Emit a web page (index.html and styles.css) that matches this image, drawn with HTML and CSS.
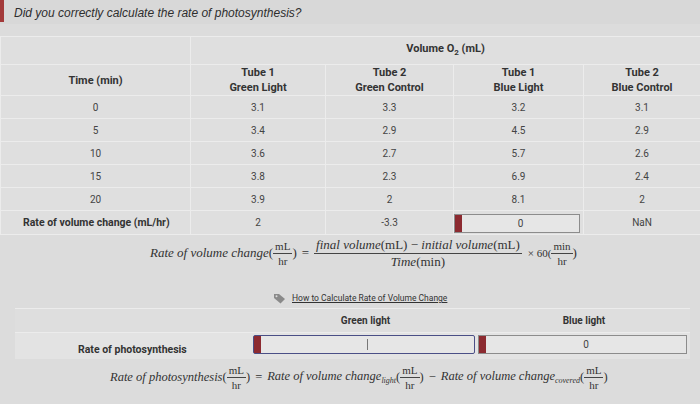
FILE: index.html
```html
<!DOCTYPE html>
<html>
<head>
<meta charset="utf-8">
<link rel="stylesheet" href="styles.css">
</head>
<body>
<div class="top">
  <div class="redbar"></div>
  <div class="question">Did you correctly calculate the rate of photosynthesis?</div>
</div>

<table class="data">
  <colgroup>
    <col class="c1"><col class="c2"><col class="c3"><col class="c4"><col class="c5">
  </colgroup>
  <tr class="h1">
    <th></th>
    <th colspan="4">Volume O<sub>2</sub> (mL)</th>
  </tr>
  <tr class="h2">
    <th>Time (min)</th>
    <th>Tube 1<br>Green Light</th>
    <th>Tube 2<br>Green Control</th>
    <th>Tube 1<br>Blue Light</th>
    <th>Tube 2<br>Blue Control</th>
  </tr>
  <tr><td>0</td><td>3.1</td><td>3.3</td><td>3.2</td><td>3.1</td></tr>
  <tr><td>5</td><td>3.4</td><td>2.9</td><td>4.5</td><td>2.9</td></tr>
  <tr><td>10</td><td>3.6</td><td>2.7</td><td>5.7</td><td>2.6</td></tr>
  <tr><td>15</td><td>3.8</td><td>2.3</td><td>6.9</td><td>2.4</td></tr>
  <tr><td>20</td><td>3.9</td><td>2</td><td>8.1</td><td>2</td></tr>
  <tr class="rate">
    <td class="label">Rate of volume change (mL/hr)</td>
    <td>2</td>
    <td>-3.3</td>
    <td class="inputcell"><div class="inbox"><span class="flag"></span><span class="val">0</span></div></td>
    <td>NaN</td>
  </tr>
</table>

<div class="formula f1">
  <span class="it">Rate of volume change</span><span>(</span><span class="frac sm"><span class="num">mL</span><span class="den">hr</span></span><span>)</span>
  <span class="eq">=</span>
  <span class="frac"><span class="num"><span class="it">final volume</span>(mL) − <span class="it">initial volume</span>(mL)</span><span class="den"><span class="it">Time</span>(min)</span></span>
  <span class="times">× 60(</span><span class="frac sm"><span class="num">min</span><span class="den">hr</span></span><span>)</span>
</div>

<div class="link">
  <svg class="tag" width="13" height="11" viewBox="0 0 13 11"><path d="M1 1h5l6 5-4.5 4.5L1 5z" fill="#8a8a8a"/><circle cx="3.5" cy="3.3" r="1" fill="#dcdcdc"/></svg>
  <a class="howto">How to Calculate Rate of Volume Change</a>
</div>

<table class="photo">
  <colgroup><col class="p1"><col class="p2"><col class="p3"></colgroup>
  <tr class="ph">
    <th></th><th>Green light</th><th>Blue light</th>
  </tr>
  <tr class="pr">
    <td class="plabel">Rate of photosynthesis</td>
    <td><div class="inbox focus"><span class="flag"></span><span class="val"><span class="caret"></span></span></div></td>
    <td><div class="inbox"><span class="flag"></span><span class="val">0</span></div></td>
  </tr>
</table>

<div class="formula f2">
  <span class="it">Rate of photosynthesis</span><span>(</span><span class="frac sm"><span class="num">mL</span><span class="den">hr</span></span><span>)</span>
  <span class="eq">=</span>
  <span class="it">Rate of volume change<sub>light</sub></span><span>(</span><span class="frac sm"><span class="num">mL</span><span class="den">hr</span></span><span>)</span>
  <span class="eq">−</span>
  <span class="it">Rate of volume change<sub>covered</sub></span><span>(</span><span class="frac sm"><span class="num">mL</span><span class="den">hr</span></span><span>)</span>
</div>
</body>
</html>
```

FILE: styles.css
```css
html, body {
  margin: 0;
  padding: 0;
}
body {
  background: #dcdcdc;
  width: 700px;
  height: 404px;
  overflow: hidden;
  font-family: Roboto, "Liberation Sans", sans-serif;
  color: #333;
}
.top {
  display: flex;
  align-items: flex-start;
  height: 24px;
  background: #d8d8d8;
}
.redbar {
  width: 4px;
  height: 22px;
  background: #a33a3a;
}
.question {
  font-family: "Liberation Sans", Arial, sans-serif;
  font-style: italic;
  font-size: 12px;
  color: #2e2e2e;
  margin-left: 10px;
  margin-top: 6px;
}
table {
  border-collapse: collapse;
  table-layout: fixed;
}
.data {
  width: 700px;
  margin-top: 12px;
  background: #dfdfdf;
}
.data .c1 { width: 190px; }
.data .c2 { width: 135px; }
.data .c3 { width: 128px; }
.data .c4 { width: 130px; }
.data .c5 { width: 117px; }
.data th, .data td {
  border: 1px solid #ececec;
  text-align: center;
  padding: 0;
}
.data th {
  font-size: 11px;
  font-weight: bold;
  color: #333;
  line-height: 15px;
}
.data tr.h1 th { height: 27px; }
.data tr.h1 th sub { font-size: 8px; }
.data tr.h2 th { height: 30px; }
.data td {
  font-size: 10px;
  color: #444;
  height: 22px;
}
.data .label {
  text-align: left;
  padding-left: 22px;
  font-weight: bold;
  font-size: 10.5px;
  color: #333;
}
.data .inputcell {
  padding: 1px 3px 0 0;
}
.inbox {
  display: flex;
  height: 19px;
  border: 1px solid #8c8c8c;
  background: #e6e6e6;
  box-sizing: border-box;
  align-items: stretch;
}
.inbox .flag {
  width: 7px;
  background: #8c2a30;
}
.inbox .val {
  flex: 1;
  display: flex;
  align-items: center;
  justify-content: center;
  font-size: 10px;
  color: #444;
}
.inbox.focus {
  border: 1.5px solid #4a4f86;
  border-radius: 2px;
}
.caret {
  display: block;
  width: 1px;
  height: 11px;
  background: #777;
}
.formula {
  display: flex;
  align-items: center;
  font-family: "Liberation Serif", "DejaVu Serif", serif;
  color: #333;
  white-space: pre;
}
.formula .it { font-style: italic; }
.formula sub {
  font-size: 8px;
  font-style: italic;
  vertical-align: -3px;
}
.f1 {
  font-size: 13px;
  margin-top: 1px;
  margin-left: 150px;
  height: 34px;
}
.frac {
  display: inline-flex;
  flex-direction: column;
  align-items: center;
  line-height: 14px;
}
.frac .num {
  border-bottom: 1px solid #444;
  padding: 0 2px 1px;
}
.frac .den {
  padding-top: 1px;
}
.frac.sm {
  font-size: 11px;
  line-height: 12px;
}
.eq { margin: 0 5px; }
.times { margin-left: 6px; font-size: 11px; }
.link {
  display: flex;
  align-items: center;
  margin-top: 21px;
  margin-left: 273px;
  height: 14px;
}
.tag { margin-right: 6px; }
.howto {
  font-size: 8.5px;
  color: #333;
  text-decoration: underline;
}
.photo {
  margin-left: 15px;
  margin-top: 3px;
  width: 675px;
  background: #dedede;
}
.photo .p1 { width: 238px; }
.photo .p2 { width: 225px; }
.photo .p3 { width: 212px; }
.photo th, .photo td {
  padding: 0;
  border-top: 1px solid #ececec;
}
.photo th {
  height: 23px;
  font-size: 10px;
  font-weight: bold;
  color: #333;
  text-align: center;
}
.photo .pr td {
  height: 19px;
  padding: 1px 0 4px;
  background: #e3e3e3;
}
.photo .pr td + td { padding-right: 3px; }
.photo .plabel {
  font-size: 10.5px;
  font-weight: bold;
  padding-left: 63px !important;
  padding-top: 7px !important;
  padding-bottom: 0 !important;
}
.f2 {
  font-size: 12.5px;
  margin-top: 2px;
  margin-left: 110px;
  height: 32px;
}
```
